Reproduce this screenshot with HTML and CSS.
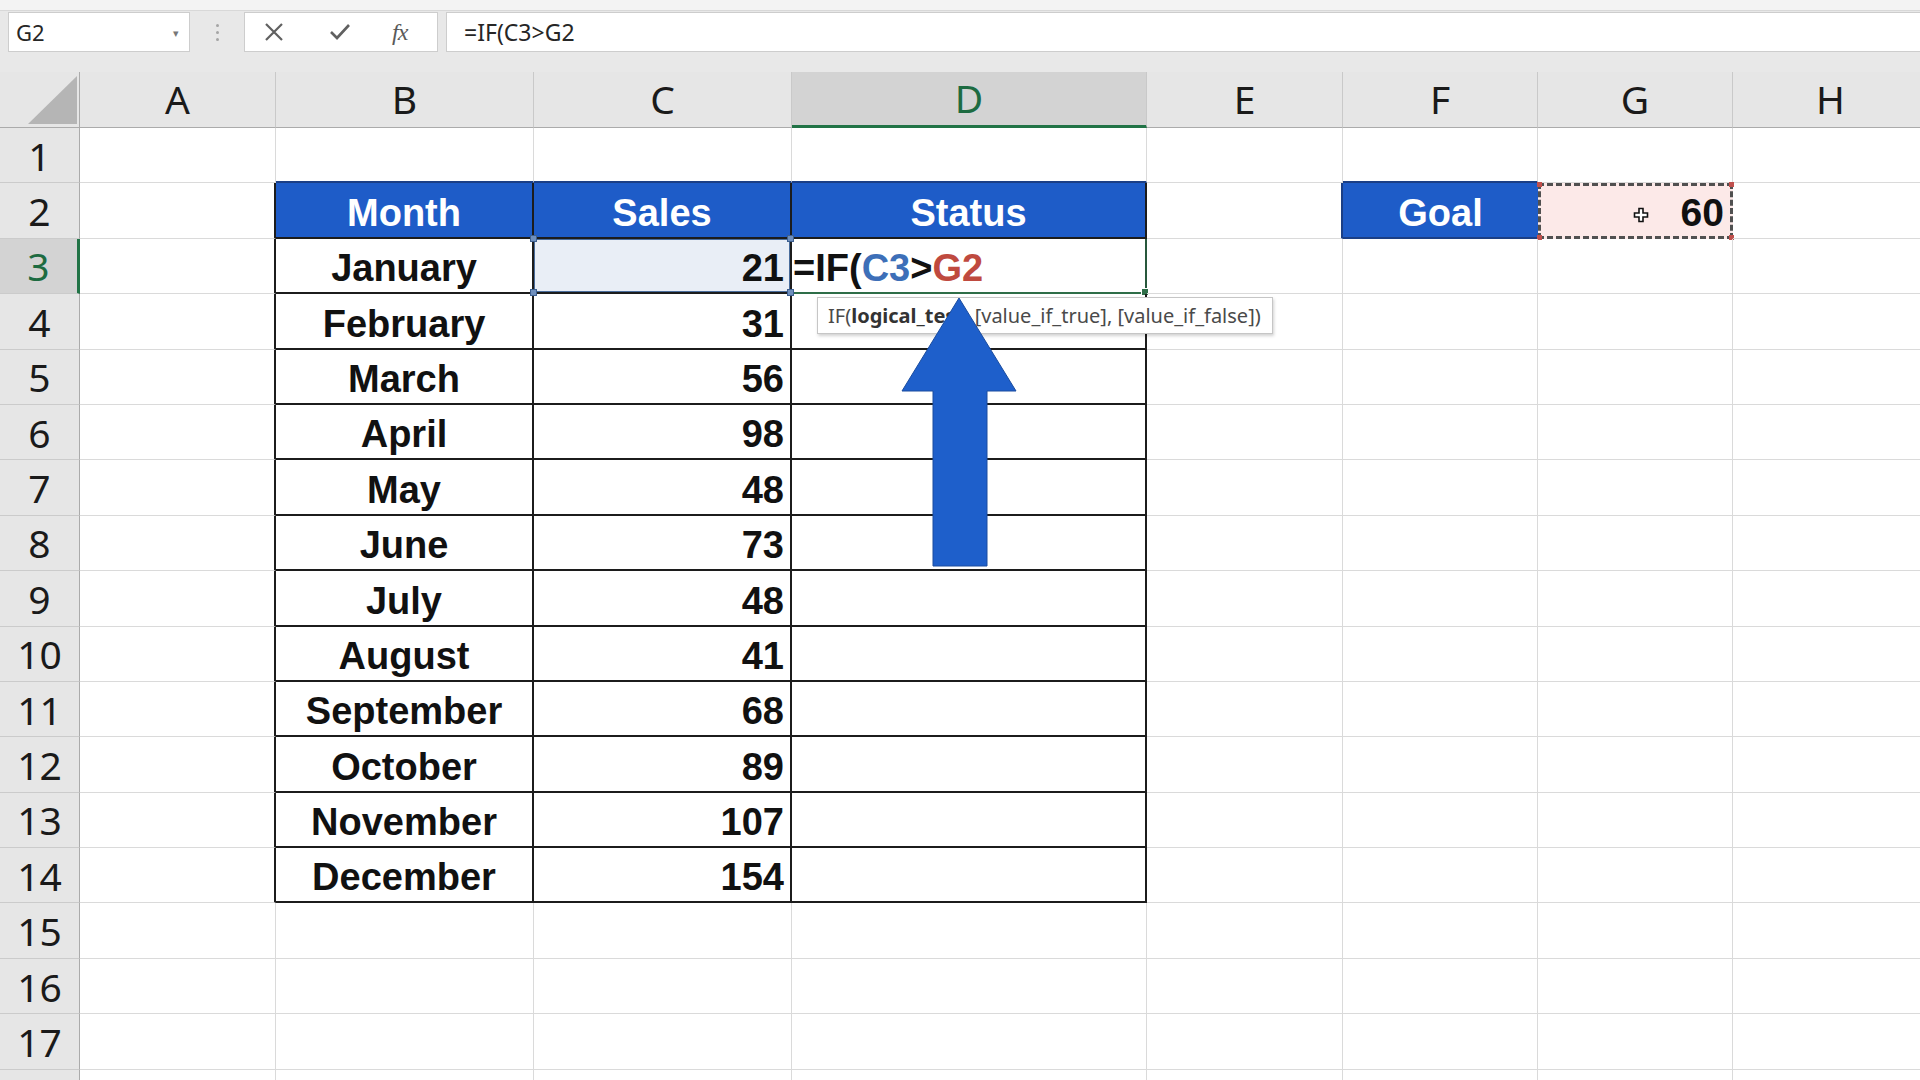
FILE: index.html
```html
<!DOCTYPE html>
<html>
<head>
<meta charset="utf-8">
<link rel="stylesheet" href="styles.css">
</head>
<body>
<div class="app">
  <div class="top">
    <div class="strip"></div>
    <div class="fbar">
      <div class="namebox"><span>G2</span><span class="caret">&#9662;</span></div>
      <div class="dots"><i></i><i></i><i></i></div>
      <div class="btns">
        <svg class="ic x" width="22" height="22" viewBox="0 0 22 22"><path d="M3 3 L19 19 M19 3 L3 19" stroke="#606060" stroke-width="2.2" fill="none"/></svg>
        <svg class="ic ok" width="24" height="22" viewBox="0 0 24 22"><path d="M3 11 L9 17 L21 4" stroke="#606060" stroke-width="2.6" fill="none"/></svg>
        <span class="fx">fx</span>
      </div>
      <div class="finput">=IF(C3&gt;G2</div>
    </div>
  </div>

  <div class="sheet">
    <div class="corner"><svg width="80" height="56" viewBox="0 0 80 56"><polygon points="28,52 77,4 77,52" fill="#b5b5b5"/></svg></div>
    <div class="hc">A</div><div class="hc">B</div><div class="hc">C</div><div class="hc hsel">D</div><div class="hc">E</div><div class="hc">F</div><div class="hc">G</div><div class="hc">H</div>

    <div class="rh">1</div><div class="c"></div><div class="c tt"></div><div class="c tt"></div><div class="c tt"></div><div class="c"></div><div class="c tt"></div><div class="c"></div><div class="c"></div>

    <div class="rh">2</div><div class="c tl"></div><div class="c th">Month</div><div class="c th">Sales</div><div class="c th">Status</div><div class="c el"></div><div class="c goal">Goal</div><div class="c g2"><svg class="move" width="16" height="16" viewBox="0 0 16 16"><path d="M6 1.5 H10 V6 H14.5 V10 H10 V14.5 H6 V10 H1.5 V6 H6 Z" fill="#fff" stroke="#111" stroke-width="1.6"/></svg><span>60</span><i class="rq q1"></i><i class="rq q2"></i><i class="rq q3"></i><i class="rq q4"></i></div><div class="c"></div>

    <div class="rh rsel">3</div><div class="c tl"></div><div class="c t">January</div><div class="c t n csel">21<i class="bq b1"></i><i class="bq b2"></i><i class="bq b3"></i><i class="bq b4"></i></div><div class="c t edit"><span class="k">=IF(</span><span class="ref1">C3</span><span class="k">&gt;</span><span class="ref2">G2</span><i class="fh"></i></div><div class="c"></div><div class="c"></div><div class="c"></div><div class="c"></div>

    <div class="rh">4</div><div class="c tl"></div><div class="c t">February</div><div class="c t n">31</div><div class="c t"></div><div class="c"></div><div class="c"></div><div class="c"></div><div class="c"></div>
    <div class="rh">5</div><div class="c tl"></div><div class="c t">March</div><div class="c t n">56</div><div class="c t"></div><div class="c"></div><div class="c"></div><div class="c"></div><div class="c"></div>
    <div class="rh">6</div><div class="c tl"></div><div class="c t">April</div><div class="c t n">98</div><div class="c t"></div><div class="c"></div><div class="c"></div><div class="c"></div><div class="c"></div>
    <div class="rh">7</div><div class="c tl"></div><div class="c t">May</div><div class="c t n">48</div><div class="c t"></div><div class="c"></div><div class="c"></div><div class="c"></div><div class="c"></div>
    <div class="rh">8</div><div class="c tl"></div><div class="c t">June</div><div class="c t n">73</div><div class="c t"></div><div class="c"></div><div class="c"></div><div class="c"></div><div class="c"></div>
    <div class="rh">9</div><div class="c tl"></div><div class="c t">July</div><div class="c t n">48</div><div class="c t"></div><div class="c"></div><div class="c"></div><div class="c"></div><div class="c"></div>
    <div class="rh">10</div><div class="c tl"></div><div class="c t">August</div><div class="c t n">41</div><div class="c t"></div><div class="c"></div><div class="c"></div><div class="c"></div><div class="c"></div>
    <div class="rh">11</div><div class="c tl"></div><div class="c t">September</div><div class="c t n">68</div><div class="c t"></div><div class="c"></div><div class="c"></div><div class="c"></div><div class="c"></div>
    <div class="rh">12</div><div class="c tl"></div><div class="c t">October</div><div class="c t n">89</div><div class="c t"></div><div class="c"></div><div class="c"></div><div class="c"></div><div class="c"></div>
    <div class="rh">13</div><div class="c tl"></div><div class="c t">November</div><div class="c t n">107</div><div class="c t"></div><div class="c"></div><div class="c"></div><div class="c"></div><div class="c"></div>
    <div class="rh">14</div><div class="c tl"></div><div class="c t">December</div><div class="c t n">154</div><div class="c t"></div><div class="c"></div><div class="c"></div><div class="c"></div><div class="c"></div>
    <div class="rh">15</div><div class="c"></div><div class="c"></div><div class="c"></div><div class="c"></div><div class="c"></div><div class="c"></div><div class="c"></div><div class="c"></div>
    <div class="rh">16</div><div class="c"></div><div class="c"></div><div class="c"></div><div class="c"></div><div class="c"></div><div class="c"></div><div class="c"></div><div class="c"></div>
    <div class="rh">17</div><div class="c"></div><div class="c"></div><div class="c"></div><div class="c"></div><div class="c"></div><div class="c"></div><div class="c"></div><div class="c"></div>
    <div class="rh"></div><div class="c"></div><div class="c"></div><div class="c"></div><div class="c"></div><div class="c"></div><div class="c"></div><div class="c"></div><div class="c"></div>
  </div>

  <div class="tooltip">IF(<b>logical_test</b>, [value_if_true], [value_if_false])</div>
  <svg class="arrow" width="120" height="272" viewBox="0 0 120 272"><polygon points="59,1 116,94 87,94 87,269 33,269 33,94 2,94" fill="#1e5fcb" stroke="#1a4c9f" stroke-width="1"/></svg>
</div>
</body>
</html>
```

FILE: styles.css
```css
html, body {
  margin: 0;
  padding: 0;
  width: 1920px;
  height: 1080px;
  overflow: hidden;
  background: #ffffff;
}
.app {
  position: relative;
  width: 1920px;
  height: 1080px;
  overflow: hidden;
  font-family: "Noto Sans", "Open Sans", sans-serif;
}
.top {
  height: 72px;
  background: #e8e8e8;
}
.strip {
  height: 10px;
  background: #f3f3f3;
  border-bottom: 1px solid #d8d8d8;
}
.fbar {
  display: flex;
  height: 40px;
  margin-top: 1px;
  padding-left: 8px;
}
.namebox {
  width: 182px;
  height: 40px;
  box-sizing: border-box;
  background: #fff;
  border: 1px solid #cdcdcd;
  display: flex;
  align-items: center;
  justify-content: space-between;
  padding: 0 10px 0 7px;
  font-size: 22px;
  color: #262626;
}
.caret {
  font-size: 11px;
  color: #777;
}
.dots {
  width: 54px;
  display: flex;
  flex-direction: column;
  align-items: center;
  justify-content: center;
  gap: 4px;
}
.dots i {
  width: 3px;
  height: 3px;
  background: #a5a5a5;
  border-radius: 50%;
}
.btns {
  width: 194px;
  height: 40px;
  box-sizing: border-box;
  background: #fff;
  border: 1px solid #cdcdcd;
  display: flex;
  align-items: center;
  padding-left: 18px;
  margin-right: 8px;
}
.ic.ok { margin-left: 43px; }
.fx {
  margin-left: 40px;
  font-family: "Liberation Serif", serif;
  font-style: italic;
  font-size: 24px;
  color: #5a5a5a;
  letter-spacing: -1px;
}
.finput {
  flex: 1;
  height: 40px;
  box-sizing: border-box;
  background: #fff;
  border: 1px solid #cdcdcd;
  border-right: none;
  display: flex;
  align-items: center;
  padding-left: 17px;
  font-size: 23px;
  color: #262626;
}
.sheet {
  display: grid;
  grid-template-columns: 80px 196px 258px 258px 355px 196px 195px 195px 196px;
  grid-template-rows: 56px repeat(18, 55.4px);
  width: 1929px;
}
.corner {
  background: #e6e6e6;
  border-right: 1px solid #ababab;
  border-bottom: 1px solid #ababab;
  box-sizing: border-box;
  overflow: hidden;
}
.corner svg { display: block; }
.hc {
  background: #e6e6e6;
  border-right: 1px solid #c9c9c9;
  border-bottom: 1px solid #ababab;
  box-sizing: border-box;
  display: flex;
  align-items: center;
  justify-content: center;
  font-size: 39px;
  color: #1a1a1a;
  padding-bottom: 2px;
}
.hc.hsel {
  background: #d3d3d3;
  color: #1d6b41;
  border-bottom: 3px solid #217346;
}
.rh {
  background: #e6e6e6;
  border-right: 1px solid #ababab;
  border-bottom: 1px solid #cbcbcb;
  box-sizing: border-box;
  display: flex;
  align-items: center;
  justify-content: center;
  font-size: 39px;
  color: #1a1a1a;
}
.rh.rsel {
  background: #d3d3d3;
  color: #1d6b41;
  border-right: 3px solid #217346;
}
.c {
  border-right: 1px solid #dadada;
  border-bottom: 1px solid #dadada;
  box-sizing: border-box;
  display: flex;
  align-items: flex-end;
  justify-content: center;
  padding-bottom: 5px;
  font-family: "Liberation Sans", Arial, sans-serif;
  font-weight: bold;
  font-size: 38px;
  line-height: 38px;
  color: #111;
  position: relative;
  white-space: nowrap;
}
.c.tt { border-bottom: 2px solid #1b3f86; }
.c.tl { border-right: 2px solid #1c1c1c; }
.c.el { border-right: 2px solid #1b3f86; }
.c.th {
  background: #1e5cc8;
  color: #fff;
  border-right: 2px solid #1c1c1c;
  border-bottom: 2px solid #1c1c1c;
}
.c.t {
  border-right: 2px solid #1c1c1c;
  border-bottom: 2px solid #1c1c1c;
}
.c.n {
  justify-content: flex-end;
  padding-right: 6px;
}
.c.goal {
  background: #1e5cc8;
  color: #fff;
  border-right: none;
  border-bottom: 2px solid #1b3f86;
}
.c.g2 {
  background: #fce9e8;
  border: 3px dashed #505050;
  justify-content: flex-end;
  padding-right: 6px;
  padding-bottom: 4px;
  font-size: 39px;
}
.move {
  margin-right: 32px;
  margin-bottom: 9px;
}
.rq {
  position: absolute;
  width: 5px;
  height: 5px;
  background: #c0504d;
}
.q1 { left: -4px; top: -4px; }
.q2 { right: -4px; top: -4px; }
.q3 { left: -4px; bottom: -4px; }
.q4 { right: -4px; bottom: -4px; }
.c.csel {
  background: #e9eef6;
  box-shadow: inset 0 0 0 1px #4a6d9c;
}
.bq {
  position: absolute;
  width: 5px;
  height: 5px;
  background: #6f8fbd;
  border: 1px solid #3d5f8f;
  z-index: 2;
}
.b1 { left: -4px; top: -4px; }
.b2 { right: -4px; top: -4px; }
.b3 { left: -4px; bottom: -4px; }
.b4 { right: -4px; bottom: -4px; }
.c.edit {
  justify-content: flex-start;
  padding-left: 1px;
  border-right: 2px solid #28583c;
  border-bottom: 2px solid #2e6e48;
}
.ref1 { color: #3d6fb8; }
.ref2 { color: #bf4a3f; }
.k { color: #111; }
.fh {
  position: absolute;
  right: -4px;
  bottom: -4px;
  width: 6px;
  height: 6px;
  background: #2e6e48;
  border: 1px solid #fff;
}
.tooltip {
  position: absolute;
  left: 817px;
  top: 297px;
  width: 456px;
  height: 37px;
  box-sizing: border-box;
  background: #fff;
  border: 1px solid #c6c6c6;
  box-shadow: 1px 2px 3px rgba(0, 0, 0, 0.18);
  display: flex;
  align-items: center;
  padding-left: 10px;
  font-family: "Noto Sans", sans-serif;
  font-size: 20px;
  color: #4a4a4a;
  white-space: nowrap;
}
.tooltip b { color: #333; }
.arrow {
  position: absolute;
  left: 900px;
  top: 297px;
}
```
